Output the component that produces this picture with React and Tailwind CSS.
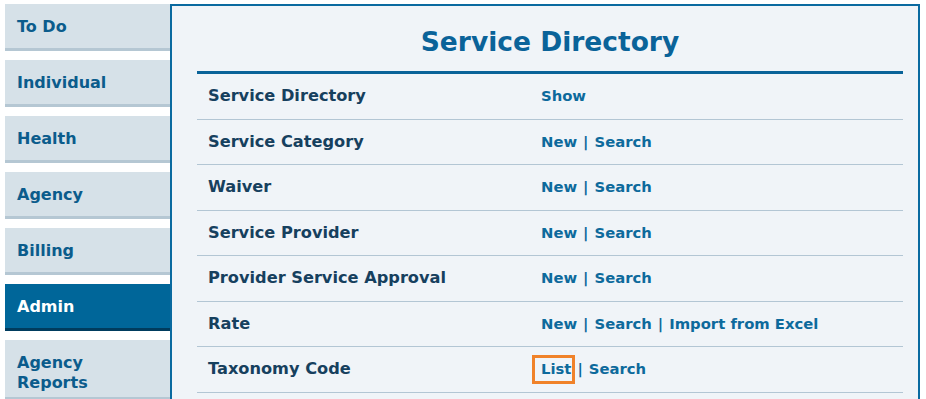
import React from "react";

const tabs = [
  { label: "To Do" },
  { label: "Individual" },
  { label: "Health" },
  { label: "Agency" },
  { label: "Billing" },
  { label: "Admin", active: true },
  { label: "Agency Reports", twoLine: true },
];

const rows = [
  { name: "Service Directory", links: ["Show"] },
  { name: "Service Category", links: ["New", "Search"] },
  { name: "Waiver", links: ["New", "Search"] },
  { name: "Service Provider", links: ["New", "Search"] },
  { name: "Provider Service Approval", links: ["New", "Search"] },
  { name: "Rate", links: ["New", "Search", "Import from Excel"] },
  { name: "Taxonomy Code", links: ["List", "Search"], highlight: "List" },
];

function SideTab({ tab }) {
  return (
    <div
      className={`mb-[9px] flex h-[47px] items-center border-b-[3px] pl-3 pt-[2px] text-[16px] font-bold ${
        tab.active
          ? "border-[#003c5e] bg-[#006699] text-white"
          : "border-[#b5c7d3] bg-[#d6e1e8] text-[#0b5c8c]"
      } ${tab.twoLine ? "h-[60px] items-start pt-[13px]" : ""}`}
    >
      <span className={tab.twoLine ? "w-[100px] leading-[20px]" : ""}>
        {tab.label}
      </span>
    </div>
  );
}

export default function App() {
  return (
    <div
      className="flex h-[399px] w-[926px] overflow-hidden bg-white pt-1 pl-[5px]"
      style={{ fontFamily: '"DejaVu Sans", Verdana, sans-serif' }}
    >
      {/* Sidebar */}
      <div className="w-[165px] shrink-0">
        {tabs.map((tab) => (
          <SideTab key={tab.label} tab={tab} />
        ))}
      </div>

      {/* Main panel */}
      <div className="h-[420px] w-[750px] shrink-0 border-2 border-[#0a6aa0] bg-[#f0f4f8] pl-[25px] pr-[15px]">
        <h1 className="flex h-[65px] items-end justify-center pb-[9px] text-[26.5px] font-bold text-[#0a6399]">
          Service Directory
        </h1>
        <div className="border-t-[3px] border-[#0a6399]">
          {rows.map((row) => (
            <div
              key={row.name}
              className="flex h-[45.5px] items-center border-b border-[#b3c6d4]"
            >
              <div className="w-[344px] pl-[11px] text-[16.2px] font-bold text-[#16405e]">
                {row.name}
              </div>
              <div className="text-[14.8px] font-bold text-[#0d6a9c]">
                {row.links.map((link, i) => (
                  <React.Fragment key={link}>
                    {i > 0 && <span className="mx-[6px]">|</span>}
                    {row.highlight === link ? (
                      <span className="relative">
                        {link}
                        <span className="absolute -top-[5px] -bottom-[7px] -left-[9px] -right-[4px] border-[3px] border-[#f0822a]" />
                      </span>
                    ) : (
                      <span>{link}</span>
                    )}
                  </React.Fragment>
                ))}
              </div>
            </div>
          ))}
        </div>
      </div>
    </div>
  );
}
